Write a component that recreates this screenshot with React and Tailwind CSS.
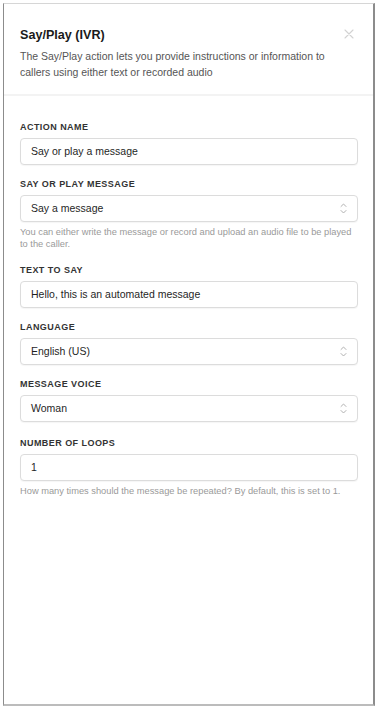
import React from 'react';

const font = { fontFamily: '"Liberation Sans", Arial, sans-serif' };

const Label = ({ children }) => (
  <label className="block text-[9px] leading-[13px] font-bold uppercase tracking-[0.45px] text-[#333] mb-[4px]">
    {children}
  </label>
);

const TextInput = ({ value }) => (
  <div className="h-[27px] flex items-center px-[10px] border border-[#dcdcdc] rounded-[4px] bg-white shadow-[0_1px_1px_rgba(0,0,0,0.04)] text-[10.5px] text-[#1f1f1f]">
    {value}
  </div>
);

const SelectInput = ({ value }) => (
  <div className="h-[27px] flex items-center justify-between pl-[10px] pr-[10px] border border-[#dcdcdc] rounded-[4px] bg-white shadow-[0_1px_1px_rgba(0,0,0,0.04)] text-[10.5px] text-[#1f1f1f]">
    <span>{value}</span>
    <svg width="7" height="11" viewBox="0 0 7 11" fill="none" stroke="#b0b0b0" strokeWidth="1" strokeLinecap="round" strokeLinejoin="round">
      <path d="M1 3.5 L3.5 1 L6 3.5" />
      <path d="M1 7.5 L3.5 10 L6 7.5" />
    </svg>
  </div>
);

const Help = ({ children }) => (
  <p className="mt-[4px] text-[9.3px] leading-[12px] text-[#9a9a9a]">{children}</p>
);

export default function App() {
  return (
    <div className="min-h-screen bg-white pt-[3px] pl-[3px]" style={font}>
      <div className="w-[372px] h-[703px] bg-white border-l border-r-2 border-l-[#8c8c8c] border-r-[#8c8c8c] border-t border-t-[#d6d6d6] border-b-2 border-b-[#bcbcbc] flex flex-col">
        <div className="relative px-[16px] pt-[22px] pb-[14px] border-b-2 border-[#f3f3f3]">
          <h2 className="text-[12.6px] leading-[18px] font-bold text-[#1a1a1a]">Say/Play (IVR)</h2>
          <p className="mt-[4px] text-[10.5px] leading-[16px] text-[#555] pr-[20px]">
            The Say/Play action lets you provide instructions or information to callers using either text or recorded audio
          </p>
          <div className="absolute right-[19px] top-[25px] flex text-[#d2d2d2]">
            <svg width="10" height="10" viewBox="0 0 10 10" stroke="currentColor" strokeWidth="1.1" strokeLinecap="round">
              <path d="M1 1 L9 9 M9 1 L1 9" />
            </svg>
          </div>
        </div>

        <div className="px-[16px] pt-[25px] pr-[15px]">
          <div>
            <Label>Action Name</Label>
            <TextInput value="Say or play a message" />
          </div>

          <div className="mt-[13px]">
            <Label>Say or Play Message</Label>
            <SelectInput value="Say a message" />
            <Help>You can either write the message or record and upload an audio file to be played to the caller.</Help>
          </div>

          <div className="mt-[14px]">
            <Label>Text to Say</Label>
            <TextInput value="Hello, this is an automated message" />
          </div>

          <div className="mt-[13px]">
            <Label>Language</Label>
            <SelectInput value="English (US)" />
          </div>

          <div className="mt-[13px]">
            <Label>Message Voice</Label>
            <SelectInput value="Woman" />
          </div>

          <div className="mt-[15px]">
            <Label>Number of Loops</Label>
            <TextInput value="1" />
            <Help>How many times should the message be repeated? By default, this is set to 1.</Help>
          </div>
        </div>
      </div>
    </div>
  );
}
